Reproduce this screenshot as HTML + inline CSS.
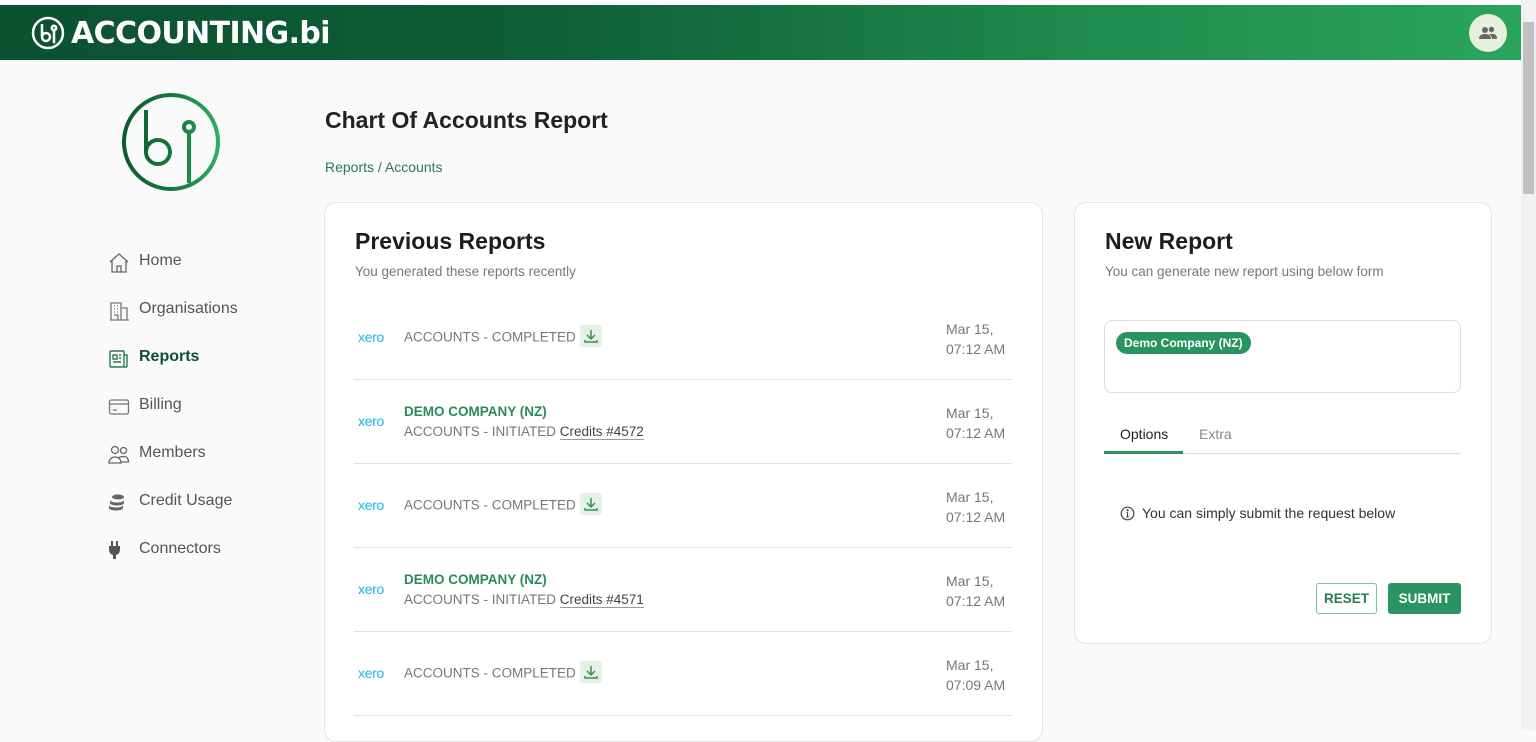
<!DOCTYPE html>
<html><head><meta charset="utf-8"><style>
*{box-sizing:border-box;margin:0;padding:0}
body{width:1536px;height:730px;overflow:hidden;background:#fafafa;font-family:"Liberation Sans",sans-serif;position:relative;color:#222}
.top{position:absolute;left:0;top:0;width:1521px;height:5px;background:#fff}
.hdr{position:absolute;left:0;top:5px;width:1521px;height:55px;background:linear-gradient(90deg,#0b5132 0%,#0e5e37 35%,#1f8a4c 70%,#2aa55c 100%)}
.brand{position:absolute;left:71px;top:11px;color:#fff;font-weight:bold;font-size:30px;letter-spacing:-0.6px;font-family:"DejaVu Sans","Liberation Sans",sans-serif}
.avatar{position:absolute;left:1469px;top:9px;width:38px;height:38px;border-radius:50%;background:#e6f0dd}
.sb{position:absolute;left:1521px;top:0;width:15px;height:730px;background:#f1f1f1}
.sb .th{position:absolute;left:2px;top:22px;width:11px;height:172px;background:#c1c1c1}
.nav{position:absolute;left:108px;font-size:16px;color:#555}
.nav span{position:absolute;left:31px;top:0;white-space:nowrap}
h1{position:absolute;left:325px;top:107px;font-size:23px;font-weight:bold;color:#222}
.bc{position:absolute;left:325px;top:159px;font-size:14px;color:#2b7a55}
.card{position:absolute;background:#fff;border:1px solid #e4e4e4;border-radius:12px}
h2{position:absolute;font-size:23px;font-weight:bold;color:#1d1d1d}
.sub{position:absolute;font-size:13.5px;color:#777}
.row{position:absolute;left:354px;width:658px;height:84px;border-bottom:1px solid #e2e2e2}
.xero{position:absolute;left:4px;font-size:14px;color:#1eb3e6;letter-spacing:-0.3px}
.t{position:absolute;left:50px;font-size:13.5px;color:#777;white-space:nowrap}
.t b{color:#2b8a5c}
.t u{color:#444;text-decoration:none;border-bottom:1px solid #999}
.dl{display:inline-block;width:22px;height:22px;background:#e3f2e5;border-radius:3px;vertical-align:middle;margin-left:4px;position:relative;top:-2px}
.dt{position:absolute;left:592px;font-size:14px;color:#777;line-height:20px}
</style></head><body>
<div class="top"></div>
<div class="hdr">
<svg style="position:absolute;left:31px;top:11px" width="34" height="34" viewBox="0 0 34 34" fill="none" stroke="#fff" stroke-width="2.5"><circle cx="17" cy="17" r="15"/><path d="M11 8v13"/><circle cx="15" cy="21" r="4"/><circle cx="23" cy="12" r="2.2"/><path d="M23 14.2v13"/></svg>
<div class="brand">ACCOUNTING.bi</div>
<div class="avatar"><svg style="position:absolute;left:10px;top:11px" width="18" height="16" viewBox="0 0 18 16" fill="#666"><circle cx="6" cy="5" r="3"/><circle cx="12.5" cy="4.5" r="2.7"/><path d="M0 14c0-4 3-5 6-5s6 1 6 5z"/><path d="M10 9.5c1-.5 2-.6 3-.6 3 0 5 1 5 5h-5c0-2-1-3.5-3-4.4z"/></svg></div>
</div>
<div class="sb"><div class="th"></div></div>

<svg style="position:absolute;left:121px;top:91px" width="102" height="102" viewBox="121 91 102 102" fill="none">
<defs><linearGradient id="g" gradientUnits="userSpaceOnUse" x1="122" y1="142" x2="220" y2="142"><stop offset="0" stop-color="#0b5a2c"/><stop offset="0.6" stop-color="#17803f"/><stop offset="1" stop-color="#2fb066"/></linearGradient></defs>
<g stroke="url(#g)" stroke-width="4"><circle cx="171" cy="142" r="47"/><path d="M146 110v42"/><circle cx="158" cy="152" r="12"/><circle cx="189" cy="127" r="5"/><path d="M189 132v51"/></g></svg>

<div class="nav" style="top:252px"><svg width="22" height="22" viewBox="0 0 22 22" fill="none" stroke="#666" stroke-width="1.3"><path d="M2 10L11 2l9 8M4 8.5V20h14V8.5M9 20v-6h4v6"/></svg><span>Home</span></div>
<div class="nav" style="top:300px"><svg width="22" height="22" viewBox="0 0 22 22" fill="none" stroke="#777" stroke-width="1.3"><path d="M2 20h19M3 20V3h10v17M13 8h6v12M6 6h1M9 6h1M6 9h1M9 9h1M6 12h1M9 12h1M6 15h4v5"/></svg><span>Organisations</span></div>
<div class="nav" style="top:348px;color:#0f4f33"><svg width="22" height="22" viewBox="0 0 22 22" fill="none" stroke="#2b7a55" stroke-width="1.4"><rect x="2" y="3" width="14" height="16" rx="1"/><path d="M16 7h3v11a1 1 0 01-1 1h-2M5 7h4v4H5zM11 7h2M11 10h2M5 14h8"/></svg><span style="font-weight:bold">Reports</span></div>
<div class="nav" style="top:396px"><svg width="22" height="22" viewBox="0 0 22 22" fill="none" stroke="#777" stroke-width="1.3"><rect x="1.5" y="4" width="19" height="14" rx="2"/><path d="M1.5 8h19M5 14h4"/></svg><span>Billing</span></div>
<div class="nav" style="top:444px"><svg width="22" height="22" viewBox="0 0 22 22" fill="none" stroke="#666" stroke-width="1.3"><circle cx="7" cy="6" r="3.5"/><circle cx="15.5" cy="6.5" r="3"/><path d="M1 19c0-4 3-6 6-6s6 2 6 6zM11 13.5c1-.7 2.5-1 4.5-1 3 0 5 2 5 5.5h-7"/></svg><span>Members</span></div>
<div class="nav" style="top:492px"><svg width="22" height="22" viewBox="0 0 22 22" fill="#666"><ellipse cx="10" cy="5" rx="6" ry="2.5"/><path d="M2 8c0 1.4 3 2.5 7 2.5s7-1.1 7-2.5v3c0 1.4-3 2.5-7 2.5s-7-1.1-7-2.5zM1 13c0 1.4 3 2.5 7 2.5s7-1.1 7-2.5v3c0 1.4-3 2.5-7 2.5s-7-1.1-7-2.5z"/></svg><span>Credit Usage</span></div>
<div class="nav" style="top:540px"><svg width="22" height="22" viewBox="0 0 22 22" fill="#555"><path d="M3 1h2v5H3zM8 1h2v5H8zM1 6h11v4a5 5 0 01-4 5v4H5v-4a5 5 0 01-4-5z"/></svg><span>Connectors</span></div>

<h1>Chart Of Accounts Report</h1>
<div class="bc">Reports / Accounts</div>

<div class="card" style="left:324px;top:202px;width:719px;height:540px"></div>
<h2 style="left:355px;top:228px">Previous Reports</h2>
<div class="sub" style="left:355px;top:264px">You generated these reports recently</div>

<div class="row" style="top:296px"><div class="xero" style="top:33px">xero</div><div class="t" style="top:31px">ACCOUNTS - COMPLETED<span class="dl"><svg width="22" height="22" viewBox="0 0 22 22" fill="none" stroke="#3a8f4f" stroke-width="1.5"><path d="M11 5v9M7 10l4 4 4-4M5 15v2h12v-2"/></svg></span></div><div class="dt" style="top:23px">Mar 15,<br>07:12 AM</div></div>
<div class="row" style="top:380px"><div class="xero" style="top:33px">xero</div><div class="t" style="top:22px;line-height:20px"><b>DEMO COMPANY (NZ)</b><br>ACCOUNTS - INITIATED <u>Credits #4572</u></div><div class="dt" style="top:23px">Mar 15,<br>07:12 AM</div></div>
<div class="row" style="top:464px"><div class="xero" style="top:33px">xero</div><div class="t" style="top:31px">ACCOUNTS - COMPLETED<span class="dl"><svg width="22" height="22" viewBox="0 0 22 22" fill="none" stroke="#3a8f4f" stroke-width="1.5"><path d="M11 5v9M7 10l4 4 4-4M5 15v2h12v-2"/></svg></span></div><div class="dt" style="top:23px">Mar 15,<br>07:12 AM</div></div>
<div class="row" style="top:548px"><div class="xero" style="top:33px">xero</div><div class="t" style="top:22px;line-height:20px"><b>DEMO COMPANY (NZ)</b><br>ACCOUNTS - INITIATED <u>Credits #4571</u></div><div class="dt" style="top:23px">Mar 15,<br>07:12 AM</div></div>
<div class="row" style="top:632px"><div class="xero" style="top:33px">xero</div><div class="t" style="top:31px">ACCOUNTS - COMPLETED<span class="dl"><svg width="22" height="22" viewBox="0 0 22 22" fill="none" stroke="#3a8f4f" stroke-width="1.5"><path d="M11 5v9M7 10l4 4 4-4M5 15v2h12v-2"/></svg></span></div><div class="dt" style="top:23px">Mar 15,<br>07:09 AM</div></div>

<div class="card" style="left:1074px;top:202px;width:418px;height:442px"></div>
<h2 style="left:1105px;top:228px">New Report</h2>
<div class="sub" style="left:1105px;top:264px">You can generate new report using below form</div>
<div style="position:absolute;left:1104px;top:320px;width:357px;height:73px;border:1px solid #ddd;border-radius:8px;background:#fff"></div>
<div style="position:absolute;left:1116px;top:332px;height:22px;padding:0 8px;border-radius:11px;background:#2a9461;color:#fff;font-size:12px;font-weight:bold;line-height:22px">Demo Company (NZ)</div>
<div style="position:absolute;left:1120px;top:426px;font-size:14px;color:#222">Options</div>
<div style="position:absolute;left:1199px;top:426px;font-size:14px;color:#888">Extra</div>
<div style="position:absolute;left:1104px;top:453px;width:357px;height:1px;background:#ddd"></div>
<div style="position:absolute;left:1104px;top:451px;width:79px;height:3px;background:#2a9461"></div>
<svg style="position:absolute;left:1120px;top:506px" width="15" height="15" viewBox="0 0 15 15" fill="none" stroke="#444" stroke-width="1.2"><circle cx="7.5" cy="7.5" r="6.3"/><path d="M7.5 6.5v4.5M6.3 11h2.4M6.5 6.5h1"/><circle cx="7.5" cy="4.2" r=".5" fill="#444"/></svg>
<div style="position:absolute;left:1142px;top:505px;font-size:14px;color:#333">You can simply submit the request below</div>
<div style="position:absolute;left:1316px;top:583px;width:61px;height:31px;border:1px solid #7cc4a0;border-radius:3px;color:#2a7a55;font-size:13.5px;font-weight:bold;text-align:center;line-height:29px;background:#fff">RESET</div>
<div style="position:absolute;left:1388px;top:583px;width:73px;height:31px;border-radius:3px;background:#2a9461;color:#fff;font-size:13.5px;font-weight:bold;text-align:center;line-height:31px">SUBMIT</div>
</body></html>
